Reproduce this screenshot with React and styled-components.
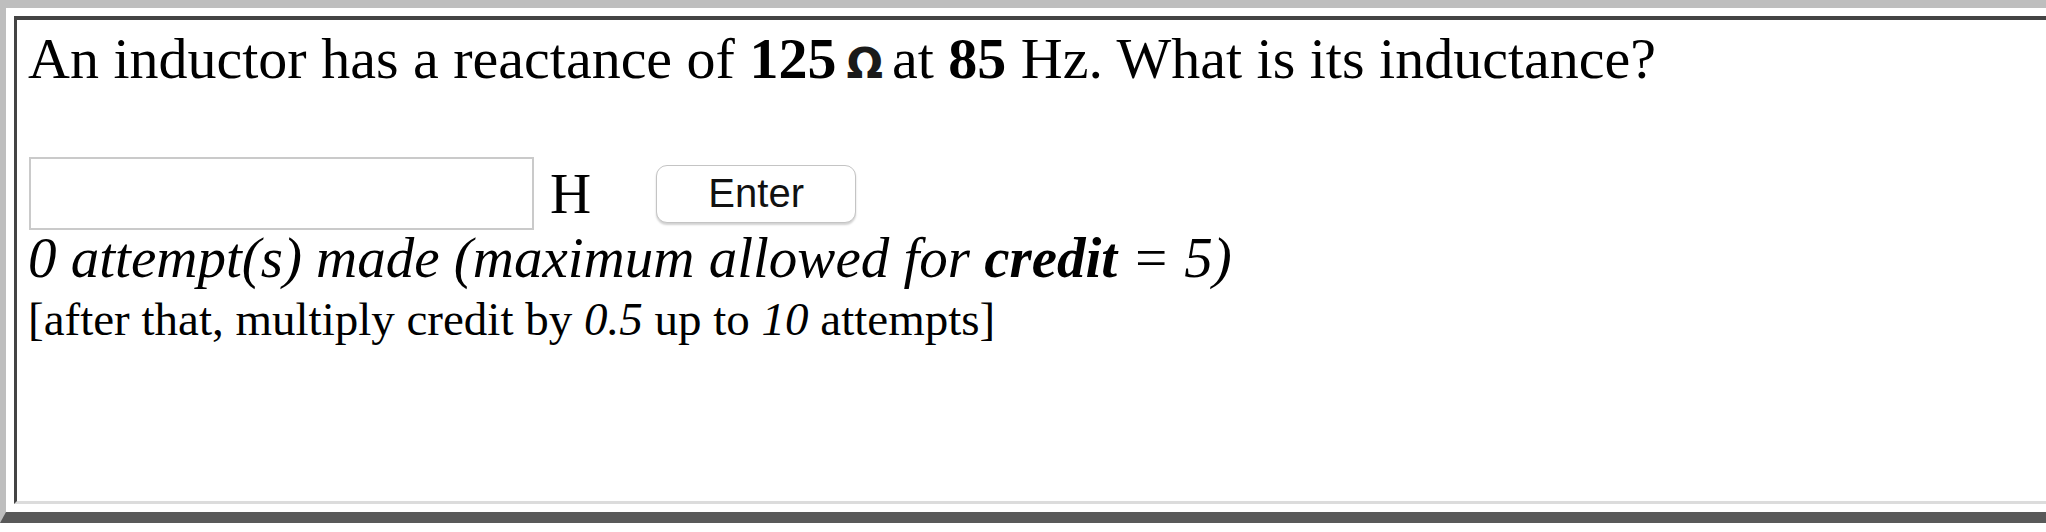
import React from "react";
import styled, { createGlobalStyle } from "styled-components";

const GlobalStyle = createGlobalStyle`
  html, body {
    margin: 0;
    padding: 0;
    background: #ffffff;
    overflow: hidden;
  }
  body {
    font-family: "Liberation Serif", "Times New Roman", serif;
    color: #000;
  }
`;

const Frame = styled.div`
  width: 2100px;
  height: 523px;
  box-sizing: border-box;
  border-top: 8px solid #bebebe;
  border-left: 6px solid #bebebe;
  border-bottom: 11px solid #595959;
  padding: 8px 0 8px 8px;
`;

const Cell = styled.div`
  height: 100%;
  box-sizing: border-box;
  border-top: 4px solid #444444;
  border-left: 3px solid #444444;
  border-bottom: 3px solid #dcdcdc;
  padding: 8px 0 0 11px;
  display: flex;
  flex-direction: column;
`;

const Question = styled.div`
  font-size: 58px;
  line-height: 62px;
  white-space: nowrap;
`;

const Ohm = styled.span`
  font-family: "DejaVu Sans", sans-serif;
  font-weight: bold;
  font-size: 43px;
  color: #1a1a1a;
  margin: 0 9px 0 10px;
`;

const AnswerRow = styled.div`
  display: flex;
  align-items: center;
  margin-top: 63px;
  margin-left: 1px;
`;

const AnswerInput = styled.input`
  width: 505px;
  height: 73px;
  box-sizing: border-box;
  border: 2px solid #cacaca;
  background: #fff;
  font-size: 40px;
  padding: 0 8px;
  outline: none;
`;

const Unit = styled.span`
  font-size: 57px;
  line-height: 62px;
  margin-left: 16px;
`;

const EnterButton = styled.button`
  margin-left: 65px;
  width: 200px;
  height: 58px;
  background: #ffffff;
  border: 1.5px solid #c4c4c4;
  border-radius: 11px;
  box-shadow: 0 2px 2px rgba(0, 0, 0, 0.18);
  font-family: "Liberation Sans", Arial, sans-serif;
  font-size: 40px;
  color: #111;
  padding: 0;
`;

const Attempts = styled.div`
  font-size: 57px;
  line-height: 62px;
  font-style: italic;
  white-space: nowrap;
  margin-top: -3px;
`;

const Policy = styled.div`
  font-size: 47px;
  line-height: 54px;
  white-space: nowrap;
  margin-top: 3px;
`;

export default function App() {
  return (
    <>
      <GlobalStyle />
      <Frame>
        <Cell>
          <Question>
            An inductor has a reactance of <b>125</b>
            <Ohm>Ω</Ohm>at <b>85</b> Hz. What is its inductance?
          </Question>
          <AnswerRow>
            <AnswerInput type="text" />
            <Unit>H</Unit>
            <EnterButton>Enter</EnterButton>
          </AnswerRow>
          <Attempts>
            0 attempt(s) made (maximum allowed for <b>credit</b> = 5)
          </Attempts>
          <Policy>
            [after that, multiply credit by <i>0.5</i> up to <i>10</i> attempts]
          </Policy>
        </Cell>
      </Frame>
    </>
  );
}
